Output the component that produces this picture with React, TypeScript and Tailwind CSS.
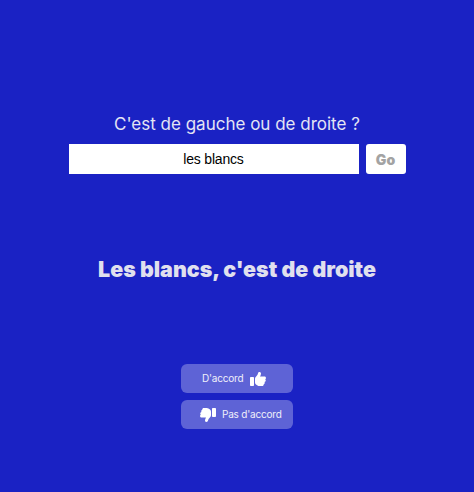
import { FaThumbsUp } from "react-icons/fa6";

export default function App() {
  return (
    <div className="w-[474px] h-[492px] bg-[#1a22c4] flex flex-col items-center font-['Inter',sans-serif]">
      <div className="mt-[114px] h-[20px] flex items-center text-[17px] leading-[20px] text-[#e4e4f4]">C'est de gauche ou de droite ?</div>
      <div className="mt-[10px] flex gap-[7px]">
        <div className="w-[290px] h-[30px] bg-white flex items-center justify-center font-['Liberation_Sans',sans-serif] text-[14px] tracking-[-0.2px] text-black">les blancs</div>
        <div className="w-[40px] h-[30px] bg-white rounded-[3px] flex items-center justify-center text-[14px] font-black text-[#a3a3a3]">Go</div>
      </div>
      <div className="mt-[81px] h-[28px] flex items-center text-[21.4px] font-black text-[#e0e0ee]">Les blancs, c'est de droite</div>
      <div className="mt-[81px] w-[112px] h-[29px] rounded-[6px] bg-[#5e63d6] flex items-center pl-[21px] gap-[7px] text-[10px] tracking-[-0.2px] text-[#f0f0fa]">
        <span>D'accord</span>
        <FaThumbsUp className="w-[16px] h-[16px] text-white" />
      </div>
      <div className="mt-[7px] w-[112px] h-[29px] rounded-[6px] bg-[#5e63d6] flex items-center pl-[19px] gap-[6px] text-[10px] tracking-[-0.2px] text-[#f0f0fa]">
        <FaThumbsUp className="w-[16px] h-[16px] rotate-180 text-white" />
        <span>Pas d'accord</span>
      </div>
    </div>
  );
}
